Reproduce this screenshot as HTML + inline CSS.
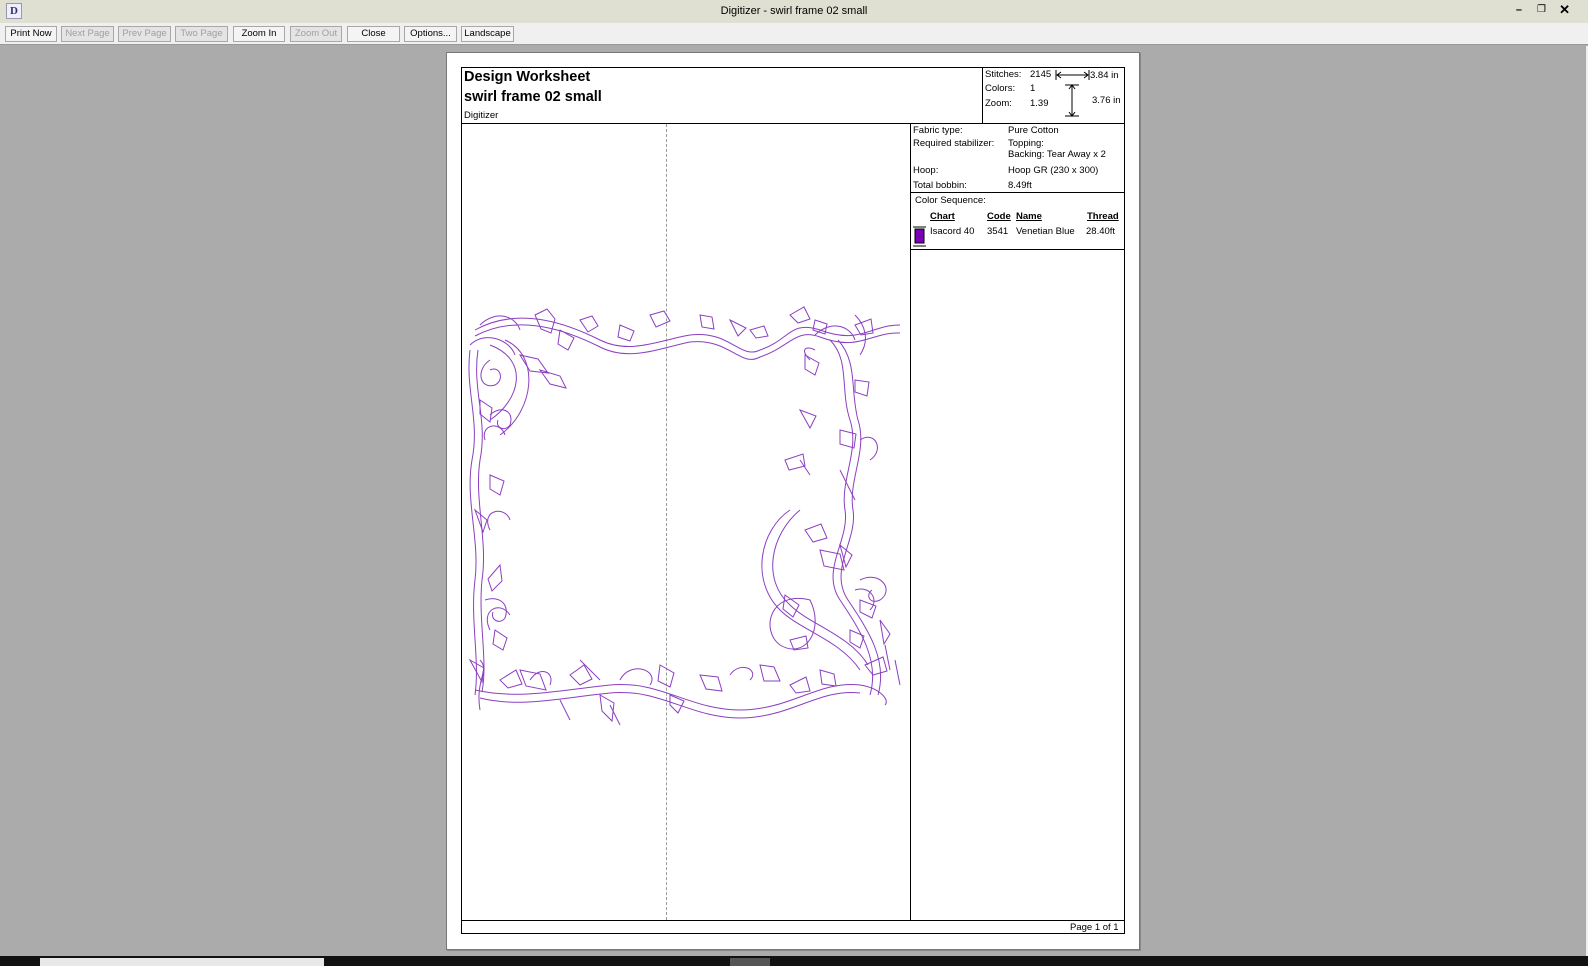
<!DOCTYPE html>
<html><head><meta charset="utf-8"><style>
*{margin:0;padding:0;box-sizing:border-box}
body{width:1588px;height:966px;overflow:hidden;background:#ababab;font-family:"Liberation Sans",Arial,sans-serif;position:relative}
.tb{position:absolute;left:0;top:0;width:1588px;height:23px;background:#dfdfd2;font-size:11px;color:#000}
.tb .t{position:absolute;left:0;width:100%;top:5px;text-align:center}
.tool{position:absolute;left:0;top:23px;width:1588px;height:22px;background:#f0f0f0;border-bottom:1px solid #999}
.btn{position:absolute;top:3px;height:16px;border:1px solid #a8a8a8;background:#f4f4f4;font-size:9.5px;text-align:center;line-height:14px;color:#000}
.dis{color:#a0a0a0;background:#e4e4e4}
.abs{position:absolute}
.page{position:absolute;left:446px;top:52px;width:694px;height:898px;background:#fff;border:1px solid #777;box-shadow:1px 1px 0 #888}
.ln{position:absolute;background:#000}
.s{font-size:9.5px;position:absolute;color:#000;white-space:nowrap}
</style></head><body>
<div class="tb"><div class="abs" style="left:6px;top:3px;width:16px;height:16px;border:1px solid #99a;background:#eef;font:bold 11px 'Liberation Serif',serif;color:#336;text-align:center;line-height:14px">D</div>
<div class="t">Digitizer - swirl frame 02 small</div>
<div class="abs" style="right:66px;top:4px;font-size:11px;font-weight:bold">–</div>
<div class="abs" style="right:42px;top:4px;font-size:10px">❐</div>
<div class="abs" style="right:18px;top:2px;font-size:13px;font-weight:bold">✕</div></div>
<div class="tool">
<div class="btn" style="left:5px;width:52px">Print Now</div>
<div class="btn dis" style="left:61px;width:53px">Next Page</div>
<div class="btn dis" style="left:118px;width:53px">Prev Page</div>
<div class="btn dis" style="left:175px;width:53px">Two Page</div>
<div class="btn" style="left:233px;width:52px">Zoom In</div>
<div class="btn dis" style="left:290px;width:52px">Zoom Out</div>
<div class="btn" style="left:347px;width:53px">Close</div>
<div class="btn" style="left:404px;width:53px">Options...</div>
<div class="btn" style="left:461px;width:53px">Landscape</div>
</div>
<div class="abs" style="left:1586px;top:46px;width:2px;height:910px;background:#eee"></div>
<div class="page"></div>
<div class="abs" style="left:461px;top:67px;width:664px;height:867px;border:1px solid #000"></div>
<div class="ln" style="left:461px;top:123px;width:664px;height:1px"></div>
<div class="ln" style="left:982px;top:67px;width:1px;height:56px"></div>
<div class="ln" style="left:910px;top:123px;width:1px;height:797px"></div>
<div class="ln" style="left:910px;top:192px;width:215px;height:1px"></div>
<div class="ln" style="left:910px;top:249px;width:215px;height:1px"></div>
<div class="ln" style="left:461px;top:920px;width:664px;height:1px"></div>
<div class="abs" style="left:666px;top:124px;width:0;height:796px;border-left:1px dashed #999"></div>
<div class="s" style="left:464px;top:69px;font-size:14.5px;font-weight:bold">Design Worksheet</div>
<div class="s" style="left:464px;top:89px;font-size:14.5px;font-weight:bold">swirl frame 02 small</div>
<div class="s" style="left:464px;top:110px">Digitizer</div>
<div class="s" style="left:985px;top:69px">Stitches:</div><div class="s" style="left:1030px;top:69px">2145</div>
<div class="s" style="left:985px;top:83px">Colors:</div><div class="s" style="left:1030px;top:83px">1</div>
<div class="s" style="left:985px;top:98px">Zoom:</div><div class="s" style="left:1030px;top:98px">1.39</div>
<div class="s" style="left:1090px;top:70px">3.84 in</div>
<div class="s" style="left:1092px;top:95px">3.76 in</div>
<svg class="abs" style="left:1055px;top:68px" width="36" height="52"><path d="M1 2V12M34 2V12M2 7H33M6 4L2 7L6 10M29 4L33 7L29 10M10 17H24M10 48H24M17 17V48M14 21L17 17L20 21M14 44L17 48L20 44" stroke="#000" fill="none" stroke-width="1"/></svg>
<div class="s" style="left:913px;top:125px">Fabric type:</div><div class="s" style="left:1008px;top:125px">Pure Cotton</div>
<div class="s" style="left:913px;top:138px">Required stabilizer:</div><div class="s" style="left:1008px;top:138px">Topping:</div>
<div class="s" style="left:1008px;top:149px">Backing: Tear Away x 2</div>
<div class="s" style="left:913px;top:165px">Hoop:</div><div class="s" style="left:1008px;top:165px">Hoop GR (230 x 300)</div>
<div class="s" style="left:913px;top:180px">Total bobbin:</div><div class="s" style="left:1008px;top:180px">8.49ft</div>
<div class="s" style="left:915px;top:195px">Color Sequence:</div>
<div class="s" style="left:930px;top:211px;font-weight:bold;text-decoration:underline">Chart</div>
<div class="s" style="left:987px;top:211px;font-weight:bold;text-decoration:underline">Code</div>
<div class="s" style="left:1016px;top:211px;font-weight:bold;text-decoration:underline">Name</div>
<div class="s" style="left:1087px;top:211px;font-weight:bold;text-decoration:underline">Thread</div>
<div class="s" style="left:930px;top:226px">Isacord 40</div>
<div class="s" style="left:987px;top:226px">3541</div>
<div class="s" style="left:1016px;top:226px">Venetian Blue</div>
<div class="s" style="left:1086px;top:226px">28.40ft</div>
<svg class="abs" style="left:912px;top:226px" width="16" height="22"><path d="M1 1H14M1 20H14" stroke="#000"/><rect x="3" y="3" width="9" height="14" fill="#7a00b8" stroke="#000"/></svg>
<div class="s" style="left:1070px;top:922px">Page 1 of 1</div>
<svg class="abs" style="left:460px;top:300px" width="450" height="440" fill="none" stroke="#8b3fc0" stroke-width="1">
<path d="M15 30C60 5 110 25 140 40C170 55 200 40 230 35C270 30 280 60 300 50C330 40 330 20 360 30C400 45 410 25 440 25"/>
<path d="M15 36C60 12 110 32 140 47C170 62 200 48 230 42C270 38 280 68 300 57C330 47 335 28 360 37C400 52 410 32 440 33"/>
<path d="M10 50C5 90 20 120 12 160C5 200 20 240 15 280C10 320 20 360 15 395"/>
<path d="M18 50C12 90 28 120 20 160C14 200 28 240 22 280C18 320 28 360 22 392"/>
<path d="M30 45C70 60 60 100 30 120M45 40C80 55 75 110 40 135"/>
<path d="M30 60C15 70 20 90 35 85C45 80 40 65 30 70"/>
<path d="M370 40C390 60 380 90 390 120C400 150 380 180 385 210C390 240 360 270 380 300C400 330 420 360 410 395"/>
<path d="M378 40C398 62 390 90 398 120C408 150 388 180 393 210C398 240 368 270 388 300C408 330 428 360 418 395"/>
<path d="M330 210C300 230 290 280 320 310C340 330 380 340 400 370"/>
<path d="M340 210C310 235 302 280 330 305C350 325 390 335 408 365"/>
<path d="M350 300C310 290 300 330 320 345C345 360 365 330 350 300Z"/>
<path d="M15 390C60 400 100 390 150 385C200 380 230 410 280 410C330 410 360 380 400 385C420 388 430 400 425 405"/>
<path d="M20 398C60 408 100 398 150 393C200 388 230 418 280 418C330 418 360 388 400 393"/>
<path d="M160 380C170 360 200 370 190 385M270 375C280 360 300 370 290 380M70 380C80 365 95 372 90 385M120 360L140 380M100 400L110 420M150 405L160 425"/>
<path d="M400 280C420 270 435 290 420 300C410 305 405 295 412 290M425 345L430 370M435 360L440 385"/>
<path d="M20 410C15 380 30 370 20 360M30 330C20 310 40 300 50 315M30 230C20 210 45 205 50 220M25 140C20 125 40 120 45 135"/>
<path d="M350 60C340 50 345 45 355 50M400 140C415 130 425 150 410 160M380 170L395 200M340 160L350 175"/>
<!-- leaves -->
<path d="M75 15l12-6 8 10-4 14-10-4z M100 30l14 8-6 12-10-6z M60 55l18 4 10 14-18-2z M80 70l20 6 6 12-16-4z M120 20l12-4 6 10-10 6z M160 25l14 6-4 10-12-4z M190 15l14-4 6 10-14 6z M240 15l12 2 2 12-12-2z M270 20l16 8-8 8z M330 15l14-8 6 12-12 4z M290 30l14-4 4 10-12 2z M355 20l12 4-2 10-12-4z M395 25l16-6 2 14-12 2z"/>
<path d="M20 100l12 8-2 14-10-8z M30 175l14 6-4 14-10-6z M15 210l12 10-4 12z M40 265l-12 14 4 12 10-10z M35 330l12 8-4 12-10-6z M10 360l14 8-2 14z M40 380l16-10 6 14-14 4z"/>
<path d="M60 370l20 4 6 16-20-4z M110 375l14-10 8 14-12 6z M140 395l14 8-2 18-10-10z M200 365l14 8-4 14-12-6z M240 375l18 2 4 14-16-2z M300 365l14 2 6 14-16 0z M330 385l16-8 4 14-14 2z M360 370l14 4 2 12-14-2z M210 395l14 6-6 12-8-8z"/>
<path d="M345 55l14 8-4 12-10-6z M395 80l14 2-2 14-12-4z M340 110l16 6-6 12z M380 130l16 4-2 14-14-4z M325 160l18-6 2 12-16 4z M345 230l16-6 6 14-14 4z M380 245l12 10-6 12z M400 300l16 6-4 12-12-6z M360 250l20 4 4 16-20-4z M325 295l14 10-6 12-10-8z M390 330l14 6-4 12-10-6z M330 340l16-4 2 12-14 2z M420 320l10 14-6 10z M405 365l18-8 4 14-14 4z"/>
<path d="M20 25C35 10 55 15 60 30M10 45C25 30 50 40 55 55M355 35C370 20 390 25 395 40M395 15C405 25 410 40 400 55"/>
<path d="M25 300C40 295 50 305 45 318C40 325 30 320 33 312M30 115C40 105 55 110 50 125C45 132 35 128 38 120M395 290C410 285 420 300 410 310"/>
</svg>
<div class="abs" style="left:0;top:956px;width:1588px;height:10px;background:#111"></div>
<div class="abs" style="left:40px;top:958px;width:284px;height:8px;background:#e8e8e8"></div>
<div class="abs" style="left:730px;top:958px;width:40px;height:8px;background:#555"></div>
</body></html>
